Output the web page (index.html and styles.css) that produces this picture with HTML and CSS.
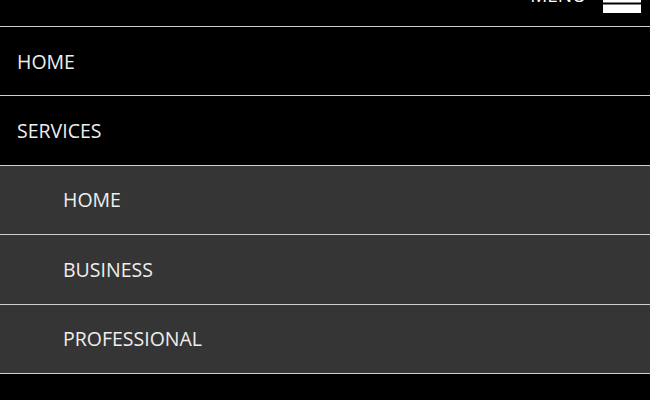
FILE: index.html
```html
<!DOCTYPE html>
<html>
<head>
<meta charset="utf-8">
<link rel="stylesheet" href="styles.css">
</head>
<body>
<header class="topbar">
  <div class="toggle">
    <span class="toggle-label">MENU</span>
    <svg class="burger" width="38" height="14" viewBox="0 0 38 14">
      <rect x="0" y="0" width="38" height="2.5" fill="#fff"/>
      <rect x="0" y="4.5" width="38" height="8.5" fill="#fff"/>
    </svg>
  </div>
</header>
<nav class="menu">
  <a class="item" href="#">HOME</a>
  <a class="item" href="#">SERVICES</a>
  <a class="item sub" href="#">HOME</a>
  <a class="item sub" href="#">BUSINESS</a>
  <a class="item sub" href="#">PROFESSIONAL</a>
  <a class="item" href="#"></a>
</nav>
</body>
</html>
```
FILE: styles.css
```css
html, body {
  margin: 0;
  padding: 0;
  background: #000;
  overflow: hidden;
}
body {
  font-family: "Open Sans", "Noto Sans", sans-serif;
  color: #eee;
}
.topbar {
  height: 26px;
  display: flex;
  justify-content: flex-end;
  align-items: flex-start;
  padding-right: 9px;
}
.toggle {
  display: flex;
  align-items: flex-start;
  gap: 17px;
}
.toggle-label {
  font-size: 19px;
  line-height: 20px;
  margin-top: -15px;
  color: #fff;
}
.burger {
  display: block;
}
.menu {
  display: flex;
  flex-direction: column;
}
.item {
  display: flex;
  align-items: center;
  height: 68.4px;
  border-top: 1px solid #cfcfcf;
  padding-left: 17px;
  font-size: 19.5px;
  color: #eee;
  text-decoration: none;
  background: #000;
}
.item.sub {
  background: #353535;
  padding-left: 63px;
}
```
